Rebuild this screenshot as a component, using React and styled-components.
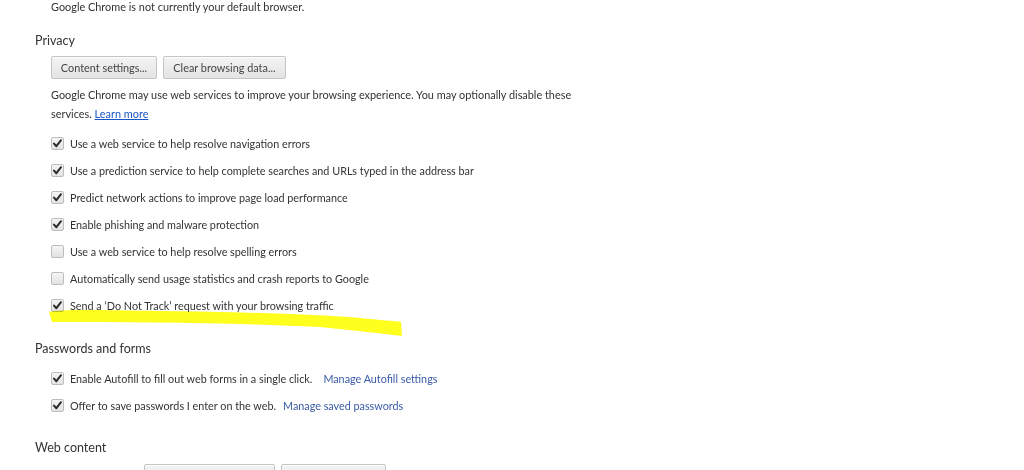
import React from "react";
import styled, { createGlobalStyle } from "styled-components";

const Global = createGlobalStyle`
  html, body { margin: 0; padding: 0; background: #fff; }
  body { font-family: Lato, "Open Sans", sans-serif; color: #333; overflow: hidden; }
  * { box-sizing: border-box; }
`;

const Page = styled.div`
  position: relative;
  width: 1024px;
  height: 470px;
  overflow: hidden;
  padding-left: 35px;
  display: flex;
  flex-direction: column;
`;

const Note = styled.div`
  font-size: 10.9px;
  line-height: 19px;
  margin-top: ${(p) => p.$mt || 0}px;
  padding-left: 16px;
  color: #333;
  max-width: ${(p) => (p.$wide ? "560px" : "none")};
`;

const Heading = styled.h3`
  margin: ${(p) => p.$mt}px 0 0 0;
  font-weight: normal;
  font-size: 12.5px;
  line-height: 20px;
  color: #333;
`;

const ButtonRow = styled.div`
  display: flex;
  gap: 6px;
  margin-top: ${(p) => p.$mt}px;
  padding-left: ${(p) => p.$indent}px;
`;

const Button = styled.button`
  height: 23px;
  width: ${(p) => p.$w}px;
  padding: 0;
  font-family: inherit;
  font-size: 10.9px;
  color: #444;
  border: 1px solid #c4c4c4;
  border-radius: 2px;
  background: linear-gradient(#f3f3f3, #e4e4e4);
  box-shadow: inset 0 1px 0 #fff;
`;

const Rows = styled.div`
  display: flex;
  flex-direction: column;
  margin-top: ${(p) => p.$mt}px;
  padding-left: 16px;
`;

const Row = styled.label`
  display: flex;
  align-items: center;
  gap: 6px;
  height: 27px;
  font-size: 10.8px;
  color: #333;
`;

const Box = styled.span`
  width: 13px;
  height: 13px;
  border: 1px solid #bdbdbd;
  border-radius: 2px;
  background: linear-gradient(#f5f5f5, #e2e2e2);
  display: flex;
  align-items: center;
  justify-content: center;
  flex: none;
`;

const Link = styled.a`
  color: ${(p) => (p.$under ? "#1a55c8" : "#3a5ba8")};
  text-decoration: ${(p) => (p.$under ? "underline" : "none")};
  margin-left: ${(p) => p.$ml || 0}px;
`;

const Highlight = styled.svg`
  position: absolute;
  left: 0;
  top: 0;
  pointer-events: none;
  mix-blend-mode: multiply;
`;

const Check = () => (
  <svg width="11" height="11" viewBox="0 0 11 11">
    <path d="M2 5.6 L4.4 8.2 L9 2.2" fill="none" stroke="#2b2b2b" strokeWidth="2" strokeLinecap="round" strokeLinejoin="round" />
  </svg>
);

const CheckRow = ({ checked, children }) => (
  <Row>
    <Box>{checked && <Check />}</Box>
    <span>{children}</span>
  </Row>
);

export default function App() {
  return (
    <>
      <Global />
      <Page>
        <Note $mt={-3}>Google Chrome is not currently your default browser.</Note>
        <Heading $mt={15}>Privacy</Heading>
        <ButtonRow $mt={5} $indent={16}>
          <Button $w={106}>Content settings...</Button>
          <Button $w={123}>Clear browsing data...</Button>
        </ButtonRow>
        <Note $mt={6} $wide>
          Google Chrome may use web services to improve your browsing experience. You may optionally disable these
          services. <Link $under href="#">Learn more</Link>
        </Note>
        <Rows $mt={7}>
          <CheckRow checked>Use a web service to help resolve navigation errors</CheckRow>
          <CheckRow checked>Use a prediction service to help complete searches and URLs typed in the address bar</CheckRow>
          <CheckRow checked>Predict network actions to improve page load performance</CheckRow>
          <CheckRow checked>Enable phishing and malware protection</CheckRow>
          <CheckRow>Use a web service to help resolve spelling errors</CheckRow>
          <CheckRow>Automatically send usage statistics and crash reports to Google</CheckRow>
          <CheckRow checked>Send a ‘Do Not Track’ request with your browsing traffic</CheckRow>
        </Rows>
        <Heading $mt={20}>Passwords and forms</Heading>
        <Rows $mt={6}>
          <CheckRow checked>
            Enable Autofill to fill out web forms in a single click.
            <Link $ml={11} href="#">Manage Autofill settings</Link>
          </CheckRow>
          <CheckRow checked>
            Offer to save passwords I enter on the web.
            <Link $ml={7} href="#">Manage saved passwords</Link>
          </CheckRow>
        </Rows>
        <Heading $mt={19}>Web content</Heading>
        <ButtonRow $mt={6} $indent={109}>
          <Button $w={131} />
          <Button $w={105} />
        </ButtonRow>
        <Highlight width="1024" height="470" viewBox="0 0 1024 470">
          <path
            d="M49 312 C 60 309, 100 310, 160 311 C 240 312, 310 314, 360 318 C 380 320, 395 321, 401 322 L 402 336 C 385 334, 360 331, 320 327 C 240 323, 140 322, 52 322 Z"
            fill="#ffff1e"
          />
        </Highlight>
      </Page>
    </>
  );
}
